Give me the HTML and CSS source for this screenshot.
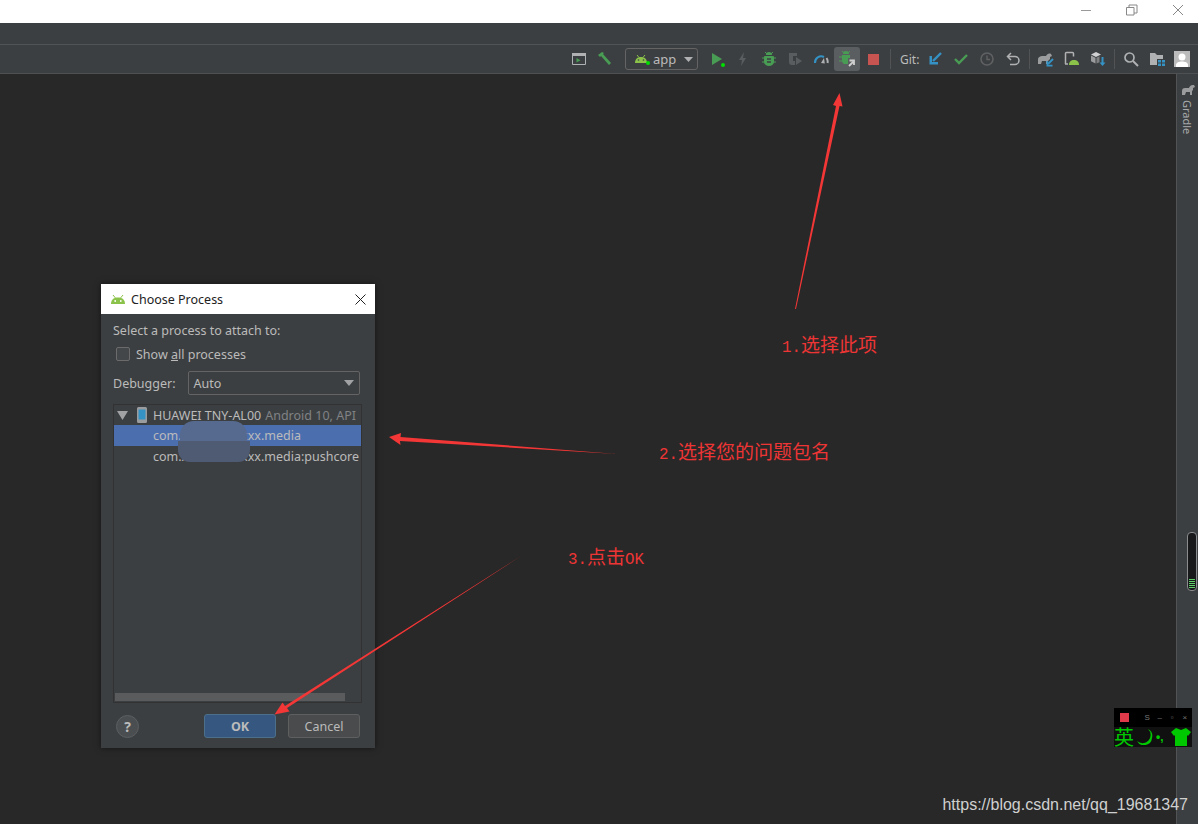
FILE: index.html
```html
<!DOCTYPE html>
<html lang="zh">
<head>
<meta charset="utf-8">
<title>Choose Process</title>
<link rel="stylesheet" href="styles.css">
</head>
<body>
<div class="ide">
  <header class="titlebar">
    <svg class="winbtn" width="12" height="12" viewBox="0 0 12 12"><path d="M1 6.5h10" stroke="#999" fill="none"/></svg>
    <svg class="winbtn" width="12" height="12" viewBox="0 0 12 12"><path d="M.5 3.5h7.500v7.500h-7.500zM3 3.500v-2.500h8v8h-3" stroke="#888" fill="none"/></svg>
    <svg class="winbtn" width="12" height="12" viewBox="0 0 12 12"><path d="M1 1l10 10M11 1l-10 10" stroke="#888" fill="none"/></svg>
  </header>
  <div class="menubar"></div>
  <nav class="toolbar">
    <span class="tool"><svg width="16" height="16" viewBox="0 0 16 16"><path d="M1.500 2.500h13v11h-13z" fill="none" stroke="#afb1b3"/><path d="M1 2h14v3h-14z" fill="#afb1b3"/><path d="M5.500 7v4.500l4-2.250z" fill="#499c54"/></svg></span>
    <span class="tool"><svg width="18" height="18" viewBox="0 0 18 18"><path d="M2 5l4-3 2 1-1 1 8 9-2 2-8-9-1 1z" fill="#499c54"/></svg></span>
    <div class="combo">
      <span class="droid-wrap"><svg width="14" height="10" viewBox="0 0 14 10"><path d="M1 9c0-4 2.500-6 6-6s6 2 6 6z" fill="#8bc34a"/><path d="M3 1l2 2.500M11 1l-2 2.500" stroke="#8bc34a"/><circle cx="4.500" cy="6" r=".8" fill="#3c3f41"/><circle cx="9.500" cy="6" r=".8" fill="#3c3f41"/></svg><i class="dot"></i></span>
      <span class="combo-label">app</span>
      <svg width="9" height="5" viewBox="0 0 9 5"><path d="M0 0h9l-4.500 5z" fill="#afb1b3"/></svg>
    </div>
    <span class="tool run"><svg width="14" height="16" viewBox="0 0 14 16"><path d="M2 2v12l10-6z" fill="#499c54"/></svg><i class="dot"></i></span>
    <span class="tool"><svg width="12" height="16" viewBox="0 0 12 16"><path d="M7 1l-5 8h3l-1 6 5-8h-3z" fill="#5a5d5f"/></svg></span>
    <span class="tool"><svg width="14" height="16" viewBox="0 0 14 16"><path d="M4 4a3 3 0 0 1 6 0zM3 5h8a1 1 0 0 1 1 1v5a5 4 0 0 1-10 0v-5a1 1 0 0 1 1-1z" fill="#499c54"/><path d="M0 7h14M0 11h14M3 1l2 2M11 1l-2 2" stroke="#499c54"/><path d="M5 8h4M5 11h4" stroke="#3c3f41" stroke-width="1.400"/></svg></span>
    <span class="tool"><svg width="16" height="16" viewBox="0 0 16 16"><path d="M2 2h8v3h-4v5h2v4h-3a3 3 0 0 1-3-3z" fill="#5a5d5f"/><path d="M9 6v8l6-4z" fill="#5a5d5f"/></svg></span>
    <span class="tool"><svg width="16" height="14" viewBox="0 0 16 14"><path d="M2 11a6.200 6.200 0 0 1 9-6" fill="none" stroke="#3592c4" stroke-width="2"/><path d="M8 11l3-5 .8 5.500z" fill="#afb1b3"/><path d="M13.500 6a6 6 0 0 1 1 5" fill="none" stroke="#afb1b3" stroke-width="2"/></svg></span>
    <span class="tool active"><svg width="18" height="18" viewBox="0 0 18 18"><path d="M5 4a3 3 0 0 1 6 0zM4 5h8v3h-2v6h-4a3 4 0 0 1-2-3z" fill="#499c54"/><path d="M1 7h3M1 11h3M4 1l2 2M12 1l-2 2" stroke="#499c54"/><path d="M11 16l4-4M11.500 10.500h4.500v4.500" stroke="#d0d0d0" stroke-width="1.800" fill="none"/></svg></span>
    <span class="tool"><i class="stop"></i></span>
    <span class="sep"></span>
    <span class="git">Git:</span>
    <span class="tool"><svg width="14" height="14" viewBox="0 0 14 14"><path d="M13 1l-8 8" stroke="#3592c4" stroke-width="2.400"/><path d="M1.500 4v8.500h8.500v-2.500h-6v-6z" fill="#3592c4"/></svg></span>
    <span class="tool"><svg width="16" height="14" viewBox="0 0 16 14"><path d="M2 7l4 4 8-8" fill="none" stroke="#499c54" stroke-width="2.400"/></svg></span>
    <span class="tool"><svg width="16" height="16" viewBox="0 0 16 16"><circle cx="8" cy="8" r="6" fill="none" stroke="#5f6163" stroke-width="1.600"/><path d="M8 4.500v4h3" fill="none" stroke="#5f6163" stroke-width="1.400"/></svg></span>
    <span class="tool"><svg width="16" height="16" viewBox="0 0 16 16"><path d="M6 2l-3.500 3.500 3.500 3.500M3 5.500h7a3.500 3.500 0 0 1 0 8h-5" fill="none" stroke="#afb1b3" stroke-width="1.500"/></svg></span>
    <span class="sep tight"></span>
    <span class="tool"><svg width="18" height="16" viewBox="0 0 18 16"><path d="M1 13v-4c0-3 2-4 5-4h3c1-2 3-3 5-2l1 2-2 1v2l-2 2v3h-2v-3h-4l-1 3z" fill="#9a9c9e"/><path d="M16 8l-5 5" stroke="#3592c4" stroke-width="2"/><path d="M9.500 10v5.500h6v-1.700h-4.300v-3.800z" fill="#3592c4"/></svg></span>
    <span class="tool"><svg width="16" height="16" viewBox="0 0 16 16"><path d="M1.500 13v-10.500a1 1 0 0 1 1-1h6a1 1 0 0 1 1 1v3" fill="none" stroke="#afb1b3" stroke-width="1.500"/><path d="M5 14c0-3.500 2-5 5-5s5 1.500 5 5z" fill="#8bc34a"/><path d="M1 13h3" stroke="#afb1b3" stroke-width="1.500"/></svg></span>
    <span class="tool"><svg width="16" height="16" viewBox="0 0 16 16"><path d="M1 3.500l5-2.500 5 2.500-5 2.500z" fill="#cfd0d1"/><path d="M1 4.500l4.500 2.300v5.700l-4.500-2.300z" fill="#9a9c9e"/><path d="M6.500 6.800l3-1.500v6l-3 1.200z" fill="#7f8183"/><path d="M12.500 6v7" stroke="#3592c4" stroke-width="2"/><path d="M9.500 11.500h6l-3 3.500z" fill="#3592c4"/></svg></span>
    <span class="sep tight"></span>
    <span class="tool"><svg width="16" height="16" viewBox="0 0 16 16"><circle cx="6.500" cy="6.500" r="4.500" fill="none" stroke="#afb1b3" stroke-width="1.700"/><path d="M10 10l5 5" stroke="#afb1b3" stroke-width="2"/></svg></span>
    <span class="tool"><svg width="16" height="14" viewBox="0 0 16 14"><path d="M1 1h5l2 2h6v4h-6v6h-7z" fill="#afb1b3"/><path d="M9 8h3v2.500h-3zM13 8h3v2.500h-3zM9 11.500h3v2.500h-3zM13 11.500h3v2.500h-3z" fill="#3592c4"/></svg></span>
    <span class="avatar"><svg width="16" height="16" viewBox="0 0 16 16"><path d="M0 0h16v16h-16z" fill="#bcbcbc"/><circle cx="8" cy="6" r="3.500" fill="#fff"/><path d="M2 16v-2c0-2.500 3-3.500 6-3.500s6 1 6 3.500v2z" fill="#fff"/></svg></span>
  </nav>
  <main class="workspace">
    <section class="editor"></section>
    <aside class="strip">
      <svg width="14" height="12" viewBox="0 0 14 12"><path d="M1 11v-4c0-2 1-3 3-3h4c.5-2 2-3.500 5-3l1 2-2 1v2l-1 1v4h-2v-3h-4l-1 3h-2.500z" fill="#9a9c9e"/></svg>
      <span class="strip-label">Gradle</span>
    </aside>
  </main>
</div>

<section class="dialog">
  <div class="dialog-title">
    <svg width="16" height="10" viewBox="0 0 16 10"><path d="M1 10c0-4.500 3-6.500 7-6.500s7 2 7 6.500z" fill="#8bc34a"/><path d="M3 1l2.500 3M13 1l-2.500 3" stroke="#8bc34a"/><circle cx="5.200" cy="7" r=".9" fill="#fff"/><circle cx="10.800" cy="7" r=".9" fill="#fff"/></svg>
    <span class="dialog-name">Choose Process</span>
    <svg width="11" height="11" viewBox="0 0 11 11"><path d="M.5 .5l10 10M10.500 .5l-10 10" stroke="#222" fill="none"/></svg>
  </div>
  <div class="dialog-body">
    <p class="prompt">Select a process to attach to:</p>
    <label class="check"><i class="box"></i><span>Show <u>a</u>ll processes</span></label>
    <div class="debugger">
      <span>Debugger:</span>
      <div class="select"><span>Auto</span><svg width="10" height="6" viewBox="0 0 10 6"><path d="M0 0h10l-5 6z" fill="#a0a2a4"/></svg></div>
    </div>
    <div class="tree">
      <div class="tree-row device">
        <svg class="twist" width="11" height="9" viewBox="0 0 11 9"><path d="M0 0h11l-5.500 9z" fill="#a0a2a4"/></svg>
        <svg class="phone" width="10" height="16" viewBox="0 0 10 16"><path d="M0 1.500a1.500 1.500 0 0 1 1.500-1.500h7a1.500 1.500 0 0 1 1.500 1.500v13a1.500 1.500 0 0 1-1.500 1.500h-7a1.500 1.500 0 0 1-1.500-1.500z" fill="#9a9c9e"/><path d="M1.500 2.500h7v10h-7z" fill="#3592c4"/></svg>
        <span class="device-name">HUAWEI TNY-AL00</span><span class="device-info">Android 10, API</span>
      </div>
      <div class="tree-row proc selected">com.xxxxxxxxxxxx.media</div>
      <div class="tree-row proc">com.xxxxxxxxxxxx.media:pushcore</div>
      <div class="hscroll"><i></i></div>
      <i class="blob blob-a"></i>
      <i class="blob blob-b"></i>
    </div>
    <div class="dialog-foot">
      <span class="help">?</span>
      <button class="btn primary" type="button">OK</button>
      <button class="btn" type="button">Cancel</button>
    </div>
  </div>
</section>

<svg class="arrows" width="1198" height="824" viewBox="0 0 1198 824">
  <path d="M795 309l41-203-3-1 6.500-12 3 13.500-3-.5-43.500 203z" fill="#f33636"/>
  <path d="M617 454l-217-13 .5 4-11.500-8 12-4-.5 4z" fill="#f33636"/>
  <path d="M521 556l-234 152 2.500 3.500-15 3 8-12 2.500 3.500z" fill="#f33636"/>
</svg>
<p class="note note-1"><b>1.</b>选择此项</p>
<p class="note note-2"><b>2.</b>选择您的问题包名</p>
<p class="note note-3"><b>3.</b>点击<b>OK</b></p>

<div class="meter"><i></i><i></i><i></i><i></i><i></i></div>
<div class="ime">
  <div class="ime-top">
    <i class="ime-logo"></i>
    <span class="ime-ctl">S</span><span class="ime-ctl">–</span><span class="ime-ctl">▫</span><span class="ime-ctl">×</span>
  </div>
  <div class="ime-bottom">
    <span class="ime-zh">英</span>
    <svg width="16" height="16" viewBox="0 0 16 16"><path d="M11 0a8 8 0 0 1-11 12 8 8 0 0 0 15-3 8 8 0 0 0-4-9z" fill="#00c800"/></svg>
    <span class="ime-punc">•,</span>
    <svg width="20" height="18" viewBox="0 0 20 18"><path d="M5 0l5 2 5-2 5 4-3 4-1-1v11h-12v-11l-1 1-3-4z" fill="#00c800"/></svg>
  </div>
</div>
<p class="watermark">https://blog.csdn.net/qq_19681347</p>
</body>
</html>
```
FILE: styles.css
```css
* { box-sizing: border-box; }
html, body { margin: 0; padding: 0; height: 824px; overflow: hidden; }
body { font-family: "Noto Sans", "Liberation Sans", sans-serif; background: #282828; color: #bbb; position: relative; }
p { margin: 0; }
.ide { display: flex; flex-direction: column; height: 824px; }

.titlebar { height: 23px; background: #fff; display: flex; justify-content: flex-end; align-items: flex-start; gap: 34px; padding: 4px 14px 0 0; }
.menubar { height: 22px; background: #3c3f41; border-bottom: 1px solid #515354; }
.toolbar { height: 29px; background: #3c3f41; border-bottom: 1px solid #4e5052; display: flex; align-items: center; justify-content: flex-end; padding-right: 2px; }
.tool { position: relative; width: 26px; height: 24px; display: flex; align-items: center; justify-content: center; flex: none; }
.tool.active { background: #5b5e60; border-radius: 3px; }
.stop { display: block; width: 11px; height: 11px; background: #c75450; }
.dot { position: absolute; width: 4px; height: 4px; border-radius: 50%; background: #00e000; right: -2px; bottom: -1px; }
.tool.run .dot { right: 5px; bottom: 4px; }
.combo { width: 73px; height: 22px; margin: 0 6px 0 7px; border: 1px solid #646464; border-radius: 3px; display: flex; align-items: center; padding-left: 8px; font-size: 13px; }
.droid-wrap { position: relative; display: flex; width: 14px; }
.combo-label { margin: 0 8px 0 5px; line-height: 20px; }
.sep { width: 1px; height: 20px; background: #515354; margin: 0 9px 0 4px; flex: none; }
.sep.tight { margin: 0 3px; }
.git { font-size: 12px; width: 21px; margin-right: 1px; flex: none; }
.avatar { display: flex; margin: 0 6px 0 4px; }

.workspace { flex: 1; display: flex; min-height: 0; }
.editor { flex: 1; background: #282828; }
.strip { width: 22px; background: #3c3f41; border-left: 1px solid #515354; display: flex; flex-direction: column; align-items: center; padding-top: 10px; gap: 4px; }
.strip-label { writing-mode: vertical-rl; font-size: 11px; color: #a9abad; }

.dialog { position: absolute; left: 101px; top: 284px; width: 274px; height: 464px; background: #3c3f41; box-shadow: 0 0 6px rgba(0,0,0,.5); display: flex; flex-direction: column; }
.dialog-title { height: 30px; background: #fff; color: #222; display: flex; align-items: center; padding: 0 9px; flex: none; font-size: 12.500px; }
.dialog-name { flex: 1; margin-left: 5px; }
.dialog-body { flex: 1; display: flex; flex-direction: column; padding: 8px 12px 0; font-size: 12.500px; min-height: 0; }
.prompt { line-height: 18px; height: 18px; }
.check { display: flex; align-items: center; gap: 6px; height: 20px; margin: 4px 0 0 3px; }
.box { display: block; width: 14px; height: 14px; border: 1px solid #6b6b6b; border-radius: 2px; background: #43474a; }
.debugger { display: flex; align-items: center; height: 24px; margin-top: 7px; gap: 12px; }
.select { flex: 1; height: 24px; margin-right: 3px; border: 1px solid #646464; border-radius: 2px; display: flex; align-items: center; justify-content: space-between; padding: 0 5px; }
.tree { position: relative; height: 299px; margin-top: 9px; margin-right: 1px; border: 1px solid #323232; background: #3c3f41; overflow: hidden; }
.tree-row { height: 21px; display: flex; align-items: center; white-space: nowrap; }
.device { height: 20px; padding-left: 3px; }
.twist { margin-right: 9px; }
.phone { margin-right: 6px; }
.device-info { color: #808285; margin-left: 4px; }
.proc { padding-left: 39px; }
.selected { background: #4b6eaf; }
.hscroll { position: absolute; left: 1px; right: 0; bottom: 0; height: 9px; }
.hscroll i { display: block; width: 230px; height: 8px; background: #595b5d; }
.blob { position: absolute; display: block; }
.blob-a { left: 66px; top: 16px; width: 67px; height: 21px; background: #566a90; border-radius: 14px 14px 0 0; }
.blob-b { left: 64px; top: 36px; width: 72px; height: 21px; background: #4f5b72; border-radius: 0 0 12px 12px; }
.dialog-foot { display: flex; align-items: center; height: 24px; margin-top: 11px; margin-right: 3px; }
.help { width: 23px; height: 23px; margin-left: 3px; border-radius: 50%; background: #4b4e50; border: 1px solid #5c5e60; display: flex; align-items: center; justify-content: center; font-weight: 700; font-size: 14px; }
.btn { width: 72px; height: 24px; padding: 0; font: inherit; color: #bbb; background: #494b4d; border: 1px solid #5e6060; border-radius: 3px; margin-left: 12px; }
.btn.primary { background: #365880; border-color: #4c708c; font-weight: 700; margin-left: auto; }

.arrows { position: absolute; left: 0; top: 0; pointer-events: none; }
.note { position: absolute; color: #ee3535; font: 19px/24px "Noto Sans CJK SC", sans-serif; white-space: nowrap; }
.note b { font: 400 15.800px "Liberation Mono", monospace; }
.note-1 { left: 782px; top: 332px; }
.note-2 { left: 659px; top: 439px; }
.note-3 { left: 568px; top: 544px; }

.meter { position: absolute; left: 1187px; top: 532px; width: 10px; height: 59px; background: #17191a; border: 1px solid #8a8c8e; border-radius: 4px; display: flex; flex-direction: column; justify-content: flex-end; align-items: center; gap: 1px; padding-bottom: 2px; }
.meter i { display: block; width: 6px; height: 1px; background: #5fd068; }
.ime { position: absolute; left: 1114px; top: 708px; width: 78px; height: 39px; background: #0a0a0a; display: flex; flex-direction: column; }
.ime-top { height: 19px; display: flex; align-items: center; padding-left: 6px; background: #000; }
.ime-logo { display: block; width: 9px; height: 9px; background: #e0394a; margin-right: 12px; }
.ime-ctl { width: 12.500px; text-align: center; font: 8px "Liberation Sans", sans-serif; color: #777; }
.ime-bottom { flex: 1; display: flex; align-items: center; gap: 3px; background: #101010; color: #00c800; }
.ime-zh { font: 20px/20px "Noto Sans CJK SC", sans-serif; }
.ime-punc { font: 700 12px "Liberation Sans", sans-serif; width: 12px; }
.watermark { position: absolute; right: 10px; top: 795px; font: 16px/20px "Liberation Sans", sans-serif; color: #d0d0d0; }
```
